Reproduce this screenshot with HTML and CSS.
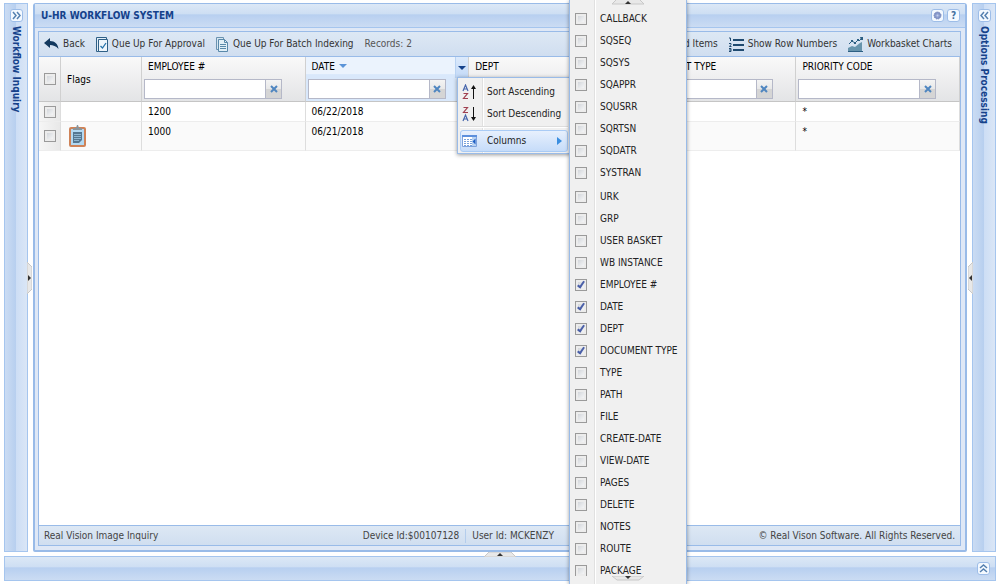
FILE: index.html
```html
<!DOCTYPE html>
<html lang="en">
<head>
    <meta charset="UTF-8">
    <title>U-HR Workflow System</title>
    <link rel="stylesheet" href="styles.css">
</head>
<body>
<div class="viewport">
    <div class="middle">
        <!-- left collapsed panel -->
        <aside class="side">
            <button class="tool" aria-label="Expand Workflow Inquiry">
                <svg width="9" height="9" viewBox="0 0 9 9"><path d="M1 1l3 3.500-3 3.500M5 1l3 3.500-3 3.500"/></svg>
            </button>
            <span class="side-title">Workflow Inquiry</span>
            <span class="split split-left"><svg width="5" height="32" viewBox="0 0 5 32"><path class="grip" d="M0 0l5 5v22l-5 5z"/><path class="tip" d="M1 13l3 3-3 3z"/></svg></span>
        </aside>

        <main class="panel">
            <header class="panel-head">
                <h1>U-HR WORKFLOW SYSTEM</h1>
                <button class="tool" aria-label="Settings">
                    <svg width="9" height="9" viewBox="0 0 9 9"><circle class="gear-teeth" cx="4.500" cy="4.500" r="3.500"/><circle class="gear" cx="4.500" cy="4.500" r="3"/><circle class="gear-dot" cx="4.500" cy="4.500" r="1"/></svg>
                </button>
                <button class="tool help" aria-label="Help">?</button>
            </header>

            <div class="panel-body">
                <div class="toolbar">
                    <button class="tb">
                        <svg width="15" height="14" viewBox="0 0 15 14"><path fill="#13395f" d="M0 6l6-5v3c5 0 8 3 8.500 8C12 9 9 8 6 8v3z"/></svg>Back
                    </button>
                    <button class="tb">
                        <svg width="12" height="15" viewBox="0 0 12 15"><path fill="#e4eef8" stroke="#2f6086" d="M.5.5h10v14H.5z"/><path fill="#eef5fb" stroke="#2f6086" d="M2.500 2.500h9v12h-9z"/><path fill="none" stroke="#2773ab" stroke-width="1.300" d="M4.500 9l2 2 3.500-5"/></svg>Que Up For Approval
                    </button>
                    <button class="tb">
                        <svg width="13" height="15" viewBox="0 0 13 15"><path fill="#d6e6f1" stroke="#6b93b0" d="M.5.5h7v12h-7z"/><path fill="#e1eff7" stroke="#5989aa" d="M2.500 2.500h6l3 3v9h-9z"/><path fill="none" stroke="#5989aa" d="M8.500 2.500v3h3M4 7.500h6M4 9.500h6M4 11.500h6"/></svg>Que Up For Batch Indexing
                    </button>
                    <span class="records">Records: 2</span>
                    <span class="fill"></span>
                    <button class="tb">Locked Items</button>
                    <button class="tb">
                        <svg width="15" height="15" viewBox="0 0 15 15"><path fill="none" stroke="#1f4a70" stroke-width="2" d="M4 3h11M4 8h11M4 13h11"/><path fill="none" stroke="#1f4a70" d="M0 1h1.500v3M0 6.500h2v1L.5 9.500h2M0 11.500h2v3H0M0 13h2"/></svg>Show Row Numbers
                    </button>
                    <button class="tb">
                        <svg width="15" height="15" viewBox="0 0 15 15"><path fill="#6794ad" d="M0 11l4-2 3 1 5-4 2-1v9H0z"/><path fill="none" stroke="#2c5f83" d="M1 7l3-3 3 2 3-3 1 1 3-3M0 14.500h15"/><path fill="#2c5f83" d="M3 3h2v2H3zM6 5h2v2H6zM9 2h2v2H9zM12 0h3v3h-2z"/></svg>Workbasket Charts
                    </button>
                </div>

                <div class="grid-wrap">
                    <table class="grid">
                        <colgroup><col class="c-check"><col class="c-flag"><col><col><col><col><col></colgroup>
                        <thead>
                        <tr>
                            <th class="check"><input type="checkbox" aria-label="Select all"></th>
                            <th class="flags">Flags</th>
                            <th><label for="f-emp">EMPLOYEE #</label>
                                <span class="filter"><input type="text" id="f-emp"><button aria-label="Clear"><svg width="8" height="8" viewBox="0 0 8 8"><path d="M1 1l6 6M7 1L1 7"/></svg></button></span></th>
                            <th class="over"><label for="f-date">DATE <i class="sort"></i></label>
                                <span class="filter"><input type="text" id="f-date"><button aria-label="Clear"><svg width="8" height="8" viewBox="0 0 8 8"><path d="M1 1l6 6M7 1L1 7"/></svg></button></span>
                                <button class="trigger" aria-label="Column menu"></button></th>
                            <th><label for="f-dept">DEPT</label>
                                <span class="filter"><input type="text" id="f-dept"><button aria-label="Clear"><svg width="8" height="8" viewBox="0 0 8 8"><path d="M1 1l6 6M7 1L1 7"/></svg></button></span></th>
                            <th><label for="f-doc">DOCUMENT TYPE</label>
                                <span class="filter"><input type="text" id="f-doc"><button aria-label="Clear"><svg width="8" height="8" viewBox="0 0 8 8"><path d="M1 1l6 6M7 1L1 7"/></svg></button></span></th>
                            <th><label for="f-pri">PRIORITY CODE</label>
                                <span class="filter"><input type="text" id="f-pri"><button aria-label="Clear"><svg width="8" height="8" viewBox="0 0 8 8"><path d="M1 1l6 6M7 1L1 7"/></svg></button></span></th>
                        </tr>
                        </thead>
                        <tbody>
                        <tr>
                            <td class="check"><input type="checkbox" aria-label="Select 1200"></td>
                            <td></td>
                            <td>1200</td>
                            <td>06/22/2018</td>
                            <td></td>
                            <td></td>
                            <td>*</td>
                        </tr>
                        <tr class="alt">
                            <td class="check"><input type="checkbox" aria-label="Select 1000"></td>
                            <td class="flag"><svg width="17" height="22" viewBox="0 0 17 22"><rect x="1" y="3" width="15" height="18" rx="1" fill="#b3d9f2" stroke="#cf8358" stroke-width="2"/><path fill="#8a949b" d="M4 5V3h3l1-3h1l1 3h3v2z"/><path fill="#557791" d="M4 7h9v8l-3 3H4z"/><path stroke="#8fb6d0" d="M5 9.500h7M5 11.500h7M5 13.500h7M5 15.500h5"/></svg></td>
                            <td>1000</td>
                            <td>06/21/2018</td>
                            <td></td>
                            <td></td>
                            <td>*</td>
                        </tr>
                        </tbody>
                    </table>
                </div>

                <footer class="status">
                    <span>Real Vision Image Inquiry</span>
                    <span class="ids"><span>Device Id:$00107128</span><span class="user">User Id: MCKENZY</span></span>
                    <span class="copy">© Real Vison Software. All Rights Reserved.</span>
                </footer>
            </div>
        </main>

        <!-- right collapsed panel -->
        <aside class="side">
            <button class="tool" aria-label="Expand Options Processing">
                <svg width="9" height="9" viewBox="0 0 9 9"><path d="M4 1L1 4.500 4 8M8 1L5 4.500 8 8"/></svg>
            </button>
            <span class="side-title">Options Processing</span>
            <span class="split split-right"><svg width="5" height="32" viewBox="0 0 5 32"><path class="grip" d="M5 0L0 5v22l5 5z"/><path class="tip" d="M4 13l-3 3 3 3z"/></svg></span>
        </aside>
    </div>

    <div class="south">
        <span class="split-south"><svg width="32" height="5" viewBox="0 0 32 5"><path class="grip" d="M0 5l5-5h22l5 5z"/><path class="tip" d="M13 4l3-3 3 3z"/></svg></span>
        <button class="tool" aria-label="Expand bottom panel">
            <svg width="9" height="9" viewBox="0 0 9 9"><path d="M1 4l3.500-3L8 4M1 8l3.500-3L8 8"/></svg>
        </button>
    </div>
</div>

<!-- column header menu -->
<div class="menu sort-menu">
    <button class="item"><svg width="16" height="16" viewBox="0 0 16 16"><path fill="none" stroke="#4766ac" stroke-width="1.200" d="M1 7l2.500-6L6 7M2 5h3"/><path fill="none" stroke="#a04050" stroke-width="1.200" d="M1.500 9.500h4l-4 5h4.500"/><path fill="#111" d="M11 15V5H9l2.500-4L14 5h-2v10z"/></svg>Sort Ascending</button>
    <button class="item"><svg width="16" height="16" viewBox="0 0 16 16"><path fill="none" stroke="#a04050" stroke-width="1.200" d="M1.500 1.500h4l-4 5h4.500"/><path fill="none" stroke="#4766ac" stroke-width="1.200" d="M1 15l2.500-6L6 15M2 13h3"/><path fill="#111" d="M11 1v10H9l2.500 4 2.500-4h-2V1z"/></svg>Sort Descending</button>
    <hr>
    <button class="item active"><svg width="16" height="14" viewBox="0 0 16 14"><path fill="#fff" stroke="#7fa3dc" d="M.5 1.500h14v11H.5z"/><path fill="#5c8fdc" d="M0 1h15v2H0z"/><path stroke="#79a3dc" stroke-dasharray="2 1" d="M2 5.500h8M2 7.500h8M2 9.500h8M2 11.500h8"/><path fill="#b9d3f3" d="M10 3h4v9h-4z"/><path fill="#1f5fc4" d="M13.500 4.500v6l-3-3z"/></svg>Columns<i class="arrow"></i></button>
</div>

<!-- columns submenu -->
<div class="menu col-menu">
    <svg class="scroll-up" width="32" height="5" viewBox="0 0 32 5"><path class="grip" d="M0 4l5-5h22l5 5z"/><path class="tip" d="M13 4l3-3 3 3z"/></svg>
    <div class="cols">
        <label><input type="checkbox">CALLBACK</label>
        <label><input type="checkbox">SQSEQ</label>
        <label><input type="checkbox">SQSYS</label>
        <label><input type="checkbox">SQAPPR</label>
        <label><input type="checkbox">SQUSRR</label>
        <label><input type="checkbox">SQRTSN</label>
        <label><input type="checkbox">SQDATR</label>
        <label><input type="checkbox">SYSTRAN</label>
        <label class="group"><input type="checkbox">URK</label>
        <label><input type="checkbox">GRP</label>
        <label><input type="checkbox">USER BASKET</label>
        <label><input type="checkbox">WB INSTANCE</label>
        <label><input type="checkbox" checked>EMPLOYEE #</label>
        <label><input type="checkbox" checked>DATE</label>
        <label><input type="checkbox" checked>DEPT</label>
        <label><input type="checkbox" checked>DOCUMENT TYPE</label>
        <label><input type="checkbox">TYPE</label>
        <label><input type="checkbox">PATH</label>
        <label><input type="checkbox">FILE</label>
        <label><input type="checkbox">CREATE-DATE</label>
        <label><input type="checkbox">VIEW-DATE</label>
        <label><input type="checkbox">PAGES</label>
        <label><input type="checkbox">DELETE</label>
        <label><input type="checkbox">NOTES</label>
        <label><input type="checkbox">ROUTE</label>
        <label><input type="checkbox">PACKAGE</label>
    </div>
    <svg class="scroll-down" width="32" height="5" viewBox="0 0 32 5"><path class="grip" d="M0 0l5 4h22l5-4z"/><path class="tip" d="M13 0l3 3 3-3z"/></svg>
</div>
</body>
</html>
```
FILE: styles.css
```css
*{
    box-sizing: border-box;
    margin: 0;
    padding: 0;
}
body{
    height: 100vh;
    overflow: hidden;
    background: #fff;
    color: #222;
    font: 10px/14px "DejaVu Sans Condensed", "Noto Sans", sans-serif;
}
button,input{
    font: inherit;
    color: inherit;
}
button{
    border: 0;
    background: none;
}
svg{
    display: block;
    flex: none;
}
.viewport{
    display: flex;
    flex-direction: column;
    gap: 4px;
    height: 100%;
    padding: 3px 4px;
}
.middle{
    flex: 1;
    display: flex;
    gap: 5px;
    min-height: 0;
}

/* collapsed side panels */
.side{
    position: relative;
    width: 24px;
    display: flex;
    flex-direction: column;
    align-items: center;
    gap: 4px;
    padding-top: 5px;
    border: 1px solid #a5c5ee;
    background: linear-gradient(to right, #cbdcf3, #b7cfef 50%, #cddef5 51%, #dae6f6);
}
.side-title{
    writing-mode: vertical-rl;
    font-weight: bold;
    color: #15428b;
}
.tool{
    display: flex;
    align-items: center;
    justify-content: center;
    width: 13px;
    height: 13px;
    border: 1px solid #9dbde8;
    border-radius: 3px;
    background: #f4f9ff;
}
.tool path{
    fill: none;
    stroke: #5580b0;
    stroke-width: 1.5;
}
.help{
    font-weight: bold;
    color: #44709f;
}
.gear-teeth{
    fill: none;
    stroke: #6275ac;
    stroke-dasharray: 1 1;
}
.gear{
    fill: #8fa0d0;
    stroke: #7486bd;
}
.gear-dot{
    fill: #c5cfec;
}
.grip{
    fill: #e8e8e8;
    stroke: #c8c8c8;
}
.tip{
    fill: #333;
}
.split{
    position: absolute;
    top: 50%;
    margin-top: -16px;
}
.split-left{
    left: 100%;
}
.split-right{
    right: 100%;
}

/* main panel */
.panel{
    flex: 1;
    display: flex;
    flex-direction: column;
    min-width: 0;
    border: 2px solid #99bbe8;
    border-top-width: 1px;
    border-radius: 3px 3px 2px 2px;
    background: #dfe8f6;
}
.panel-head{
    display: flex;
    align-items: center;
    gap: 3px;
    height: 24px;
    padding: 0 5px 0 6px;
    border-bottom: 1px solid #a5c5ee;
    background: linear-gradient(#dce8f6, #cddef3 45%, #b7cff0 46%, #cbdcf3);
}
.panel-head h1{
    flex: 1;
    font-size: 10px;
    color: #15428b;
}
.panel-body{
    flex: 1;
    display: flex;
    flex-direction: column;
    min-height: 0;
    margin: 3px 4px 4px 3px;
    border: 1px solid #99bbe8;
}
.toolbar{
    display: flex;
    align-items: center;
    gap: 11px;
    height: 25px;
    padding: 0 8px 0 5px;
    border-bottom: 1px solid #99bbe8;
    background: linear-gradient(#dde8f4, #d0def0);
    color: #333;
}
.tb{
    display: flex;
    align-items: center;
    gap: 4px;
    white-space: nowrap;
}
.records{
    color: #555;
}
.fill{
    flex: 1;
}

/* grid */
.grid-wrap{
    flex: 1;
    min-height: 0;
    background: #fff;
}
.grid{
    width: 100%;
    table-layout: fixed;
    border-collapse: separate;
    border-spacing: 0;
}
.c-check{
    width: 22px;
}
.c-flag{
    width: 81px;
}
.grid th{
    position: relative;
    height: 45px;
    padding: 3px 2px 2px;
    border-right: 1px solid #d0d0d0;
    border-bottom: 1px solid #c5c5c5;
    background: linear-gradient(#f9f9f9, #e3e4e6);
    font-weight: normal;
    text-align: left;
    vertical-align: top;
    color: #000;
}
.grid th label{
    display: block;
    padding-left: 4px;
}
.grid th.over{
    background: linear-gradient(#ebf3fd, #ebf3fd 38%, #d9e8fb 40%);
}
.grid th.flags{
    padding-left: 6px;
    vertical-align: middle;
}
.grid td{
    height: 20px;
    padding: 3px 6px 2px;
    border-right: 1px solid #ddd;
    border-bottom: 1px solid #ededed;
    vertical-align: top;
    color: #000;
}
.grid .alt td{
    height: 29px;
    background: #fafafa;
}
.grid .check,.grid .alt .check{
    padding: 0 5px;
    vertical-align: middle;
    background: linear-gradient(to right, #f6f6f6, #e8e8e8);
}
.grid th.check{
    background: linear-gradient(#f9f9f9, #e3e4e6);
}
.grid .flag{
    padding: 3px 8px;
}
.filter{
    display: flex;
    width: 138px;
    height: 20px;
    margin-top: 5px;
    border: 1px solid #b5b8c8;
}
.filter input{
    flex: 1;
    min-width: 0;
    padding: 0 3px;
    border: 0;
    background: #fff;
}
.filter button{
    display: flex;
    align-items: center;
    justify-content: center;
    width: 16px;
    border-left: 1px solid #b5b8c8;
    background: linear-gradient(#f4f4f4, #e8e8e8 50%, #d5d5d5 52%);
}
.filter path{
    stroke: #4f86c0;
    stroke-width: 2;
}
.sort{
    display: inline-block;
    margin: 0 0 2px 1px;
    border: 4px solid transparent;
    border-top-color: #5b94d8;
    border-bottom: 0;
}
/* arrow that opens the header menu */
.trigger{
    position: absolute;
    top: 0;
    right: 0;
    width: 13px;
    height: 21px;
    border-left: 1px solid #b9d3f3;
    background: linear-gradient(#dceafc, #c2d9f7);
}
.trigger::after{
    content: "";
    display: block;
    margin: 0 auto;
    width: 0;
    border: 4px solid transparent;
    border-top-color: #15428b;
    border-bottom: 0;
}

input[type=checkbox]{
    appearance: none;
    display: block;
    position: relative;
    flex: none;
    width: 12px;
    height: 12px;
    border: 1px solid #9a9a9a;
    background: linear-gradient(135deg, #c8ccd2, #fff);
    box-shadow: inset 0 0 0 2px #ececec;
}
input[type=checkbox]:checked::after{
    content: "";
    position: absolute;
    left: 3px;
    top: 0;
    width: 2px;
    height: 6px;
    border: solid #4a5fa8;
    border-width: 0 2px 2px 0;
    transform: rotate(35deg);
}

/* status bar */
.status{
    display: flex;
    align-items: center;
    justify-content: space-between;
    height: 20px;
    padding: 0 5px;
    border-top: 1px solid #99bbe8;
    background: linear-gradient(#dde8f4, #d0def0);
    color: #444;
}
.ids{
    display: flex;
    gap: 6px;
}
.user{
    padding-left: 6px;
    border-left: 1px solid #b4cdec;
}

.south{
    position: relative;
    display: flex;
    align-items: center;
    justify-content: flex-end;
    height: 25px;
    padding-right: 5px;
    border: 1px solid #a5c5ee;
    background: linear-gradient(#dce8f6, #cddef3 45%, #b7cff0 46%, #cbdcf3);
}
.split-south{
    position: absolute;
    left: 50%;
    bottom: 100%;
    margin-left: -16px;
}

/* menus */
.menu{
    position: absolute;
    border: 1px solid #99bbe8;
    background: #f0f0f0 linear-gradient(to right, transparent 24px, #e0e0e0 24px, #e0e0e0 25px, #fff 25px, #fff 26px, transparent 26px);
    box-shadow: 0 1px 4px rgba(0,0,0,.4);
}
.sort-menu{
    left: 457px;
    top: 77px;
    width: 114px;
    padding: 3px 2px 1px;
}
.item{
    display: flex;
    align-items: center;
    gap: 9px;
    width: 100%;
    height: 22px;
    padding: 0 1px;
    border: 1px solid transparent;
    white-space: nowrap;
}
.sort-menu hr{
    margin: 1px 0 2px;
    border: 0;
    border-top: 1px solid #ddd;
    border-bottom: 1px solid #fff;
}
.active{
    border-color: #a9cbf5;
    border-radius: 3px;
    background: linear-gradient(#e7f0fd, #c6dcf9);
}
.arrow{
    margin-left: auto;
    margin-right: 4px;
    border: 4px solid transparent;
    border-left: 5px solid #3a8ee0;
    border-right: 0;
}
.col-menu{
    left: 569px;
    top: 0;
    bottom: 0;
    display: flex;
    flex-direction: column;
    width: 118px;
    border-width: 0 1px;
}
.scroll-up,.scroll-down{
    margin: 0 auto;
}
.cols{
    flex: 1;
    min-height: 0;
    overflow: hidden;
    padding-top: 3px;
}
.cols label{
    display: flex;
    align-items: center;
    gap: 13px;
    height: 22px;
    padding-left: 5px;
    line-height: 16px;
    white-space: nowrap;
}
.cols .group{
    margin-top: 2px;
}
.scroll-down{
    margin-bottom: 3px;
}
```
